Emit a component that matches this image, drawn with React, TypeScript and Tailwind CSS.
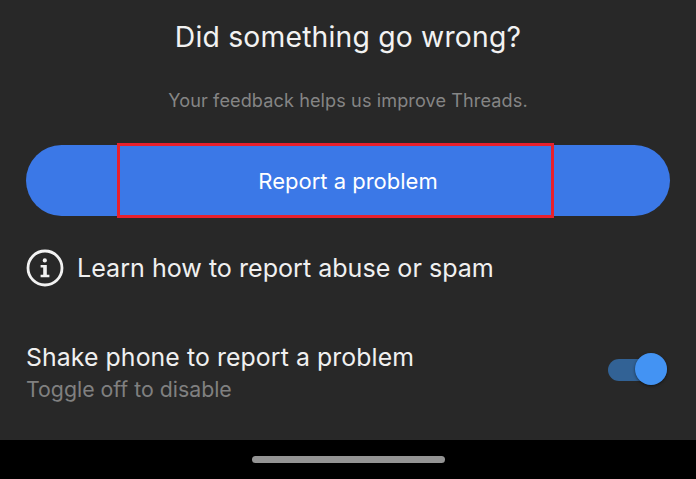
export default function App() {
  return (
    <div className="w-[696px] h-[479px] overflow-hidden flex flex-col bg-black font-['Inter','Liberation_Sans',sans-serif]">
      <div className="h-[440px] bg-[#282828] flex flex-col px-[26px]">
        <h1 className="mt-[20px] h-[34px] flex items-center justify-center text-[28.3px] leading-[34px] font-normal text-[#f2f2f2] tracking-[0.2px]">
          Did something go wrong?
        </h1>
        <p className="mt-[35px] h-[22px] flex items-center justify-center text-[18.1px] leading-[22px] text-[#858585] tracking-[0.1px]">
          Your feedback helps us improve Threads.
        </p>
        <div className="relative mt-[34px] h-[71px] pt-[1px] rounded-full bg-[#3b78e7] flex items-center justify-center text-[22px] text-white shrink-0">
          Report a problem
          <div className="absolute left-[91px] top-[-2px] w-[437px] h-[75px] border-[3px] border-[#e8202c]" />
        </div>
        <div className="mt-[33px] h-[38px] flex items-center gap-[13px]">
          <svg width="38" height="38" viewBox="0 0 38 38" fill="none" className="shrink-0">
            <circle cx="19" cy="19" r="17" stroke="#f2f2f2" strokeWidth="2.8" />
            <circle cx="18.8" cy="11.4" r="2.1" fill="#f2f2f2" />
            <path d="M14.6 16h6.2v9.8h2.6v2.4h-8.8v-2.4h2.6v-7.4h-2.6z" fill="#f2f2f2" />
          </svg>
          <span className="text-[25.1px] leading-[32px] text-[#f0f0f0]">Learn how to report abuse or spam</span>
        </div>
        <div className="mt-[54px] flex items-start justify-between">
          <div className="flex flex-col">
            <span className="text-[24.8px] leading-[32px] text-[#f0f0f0] tracking-[0.1px]">Shake phone to report a problem</span>
            <span className="text-[21.3px] leading-[30px] text-[#808080] mt-[1px]">Toggle off to disable</span>
          </div>
          <div className="relative w-[59px] h-[22px] mt-[18px] mr-[3px] rounded-full bg-[#326295]">
            <div className="absolute right-0 top-[-6px] w-[32px] h-[32px] rounded-full bg-[#4393f3] shadow-[0_1px_3px_rgba(0,0,0,0.5)]" />
          </div>
        </div>
      </div>
      <div className="flex-1 flex items-center justify-center">
        <div className="w-[193px] h-[7px] rounded-full bg-[#949494]" />
      </div>
    </div>
  );
}
